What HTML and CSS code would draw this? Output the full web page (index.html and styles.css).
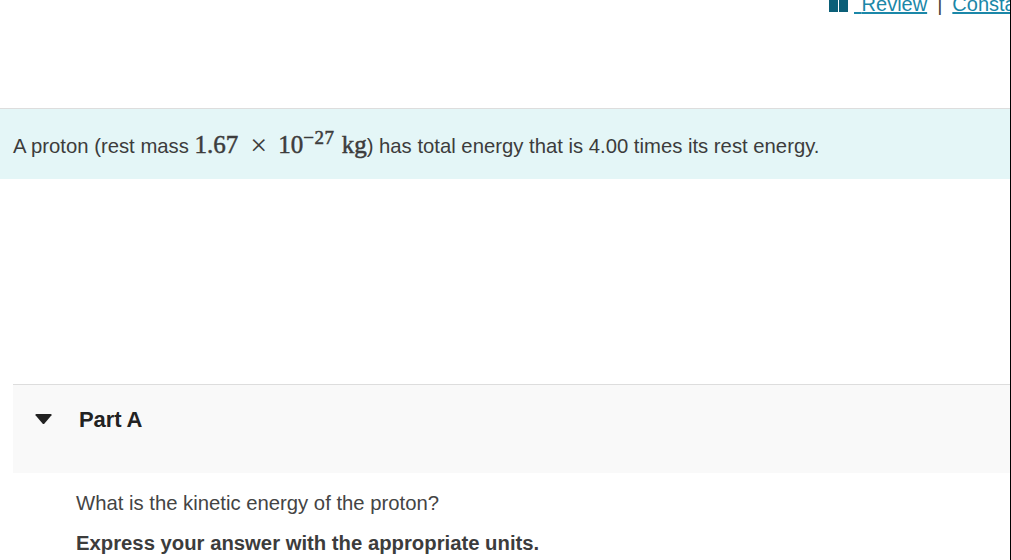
FILE: index.html
```html
<!DOCTYPE html>
<html lang="en">
<head>
<meta charset="utf-8">
<title>Proton</title>
<link rel="stylesheet" href="styles.css">
</head>
<body>
<div class="page">
  <nav class="toplinks">
    <svg class="book" width="21" height="12" viewBox="0 0 21 12"><path d="M1 0h9v12H1zM11 0h9v12H11z" fill="#0b5f78"/></svg>
    <a href="#" class="link"><span class="gap">&nbsp;</span>Review</a>
    <span class="sep">|</span>
    <a href="#" class="link">Constants</a>
  </nav>
  <section class="intro">
    <p>A proton (rest mass <span class="math">1.67</span><span class="times">×</span><span class="math">10<sup>−27</sup></span><span class="math unit">kg</span>) has total energy that is 4.00 times its rest energy.</p>
  </section>
  <section class="part">
    <header class="part-head">
      <svg class="caret" width="17" height="10" viewBox="0 0 17 10"><path d="M1.500 0h14q1.500 0 1 1.200L9.500 9.500q-1 1-2 0L.5 1.200Q0 0 1.500 0z" fill="#222"/></svg>
      <h2>Part A</h2>
    </header>
    <div class="part-body">
      <p class="q">What is the kinetic energy of the proton?</p>
      <p class="ask">Express your answer with the appropriate units.</p>
    </div>
  </section>
</div>
</body>
</html>
```
FILE: styles.css
```css
html, body { margin: 0; padding: 0; background: #fff; }
body { width: 1011px; height: 560px; overflow: hidden; font-family: "Liberation Sans", Arial, sans-serif; color: #3c3c3c; }
.page { width: 1010px; height: 560px; border-right: 1px solid #000; overflow: hidden; display: flex; flex-direction: column; }
.toplinks { height: 15px; display: flex; align-items: flex-end; justify-content: flex-start; padding-left: 828px; white-space: nowrap; font-size: 20px; line-height: 22px; margin-bottom: 93px; flex: none; }
.book { flex: none; margin-bottom: 3px; }
.link { color: #1b87a8; text-decoration: underline; margin-left: 5px; }
.gap { letter-spacing: 2px; }
.sep { margin: 0 10px 0 10px; color: #444; }
.sep + .link { margin-left: 0; }
.intro { background: #e4f6f7; border-top: 1px solid #ddd; height: 67px; display: flex; align-items: center; padding: 3px 0 0 13px; flex: none; }
.intro p { margin: 0; font-size: 20.3px; line-height: 30px; white-space: nowrap; }
.math { font-family: "Liberation Serif", serif; font-size: 25px; -webkit-text-stroke: 0.5px #3c3c3c; color: #3c3c3c; }
.times { font-family: "Liberation Serif", serif; font-size: 30px; line-height: 0; margin: 0 11px 0 12px; vertical-align: -2px; }
.math sup { font-size: 19px; line-height: 0; vertical-align: 9px; letter-spacing: 0.6px; }
.unit { margin-left: 7px; }
.part { margin: 205px 0 0 13px; flex: none; }
.part-head { background: #f9f9f9; border-top: 1px solid #ddd; height: 88px; display: flex; align-items: flex-start; padding-left: 22px; }
.caret { margin-top: 29px; }
.part-head h2 { margin: 21px 0 0 27px; font-size: 22px; line-height: 28px; font-weight: bold; color: #222; letter-spacing: -0.1px; }
.part-body { padding: 16px 0 0 63px; }
.part-body p { margin: 0; font-size: 20.3px; line-height: 28px; white-space: nowrap; }
.q { color: #444; }
.part-body .ask { margin-top: 12px; font-weight: bold; }
```
